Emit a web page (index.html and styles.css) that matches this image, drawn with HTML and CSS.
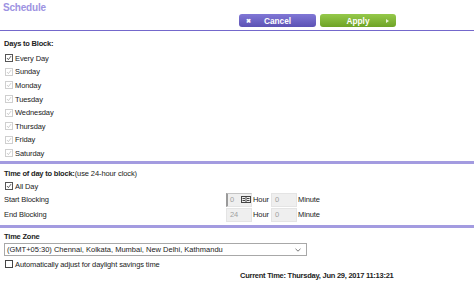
FILE: index.html
```html
<!DOCTYPE html>
<html>
<head>
<meta charset="utf-8">
<title>Schedule</title>
<link rel="stylesheet" href="styles.css">
</head>
<body>
<div class="page">
  <header class="top">
    <h1 class="title">Schedule</h1>
    <div class="actions">
      <button class="btn cancel"><span class="bx">&#x2716;</span><span class="blbl">Cancel</span><span></span></button>
      <button class="btn apply"><span></span><span class="blbl">Apply</span><span class="barr"></span></button>
    </div>
  </header>

  <section class="days">
    <div class="row head">Days to Block:</div>
    <div class="row day"><span class="cb on"><svg viewBox="0 0 8 8"><polyline points="1.3,4 3.2,6.2 6.8,1.4"/></svg></span>Every Day</div>
    <div class="row day"><span class="cb off"><svg viewBox="0 0 8 8"><polyline points="1.3,4 3.2,6.2 6.8,1.4"/></svg></span>Sunday</div>
    <div class="row day"><span class="cb off"><svg viewBox="0 0 8 8"><polyline points="1.3,4 3.2,6.2 6.8,1.4"/></svg></span>Monday</div>
    <div class="row day"><span class="cb off"><svg viewBox="0 0 8 8"><polyline points="1.3,4 3.2,6.2 6.8,1.4"/></svg></span>Tuesday</div>
    <div class="row day"><span class="cb off"><svg viewBox="0 0 8 8"><polyline points="1.3,4 3.2,6.2 6.8,1.4"/></svg></span>Wednesday</div>
    <div class="row day"><span class="cb off"><svg viewBox="0 0 8 8"><polyline points="1.3,4 3.2,6.2 6.8,1.4"/></svg></span>Thursday</div>
    <div class="row day"><span class="cb off"><svg viewBox="0 0 8 8"><polyline points="1.3,4 3.2,6.2 6.8,1.4"/></svg></span>Friday</div>
    <div class="row day"><span class="cb off"><svg viewBox="0 0 8 8"><polyline points="1.3,4 3.2,6.2 6.8,1.4"/></svg></span>Saturday</div>
  </section>

  <div class="divider"></div>

  <section class="times">
    <div class="row trow"><b>Time of day to block:</b>(use 24-hour clock)</div>
    <div class="row trow"><span class="cb on"><svg viewBox="0 0 8 8"><polyline points="1.3,4 3.2,6.2 6.8,1.4"/></svg></span>All Day</div>
    <div class="row block">
      <span class="blabel">Start Blocking</span>
      <span class="field focus">0<svg class="kbd" viewBox="0 0 10 7"><rect x="0.5" y="0.5" width="9" height="6"/><line x1="5" y1="0.5" x2="5" y2="6.5"/><line x1="1.5" y1="2.5" x2="4" y2="2.5"/><line x1="1.5" y1="4.5" x2="4" y2="4.5"/><line x1="6" y1="2.5" x2="8.5" y2="2.5"/><line x1="6" y1="4.5" x2="8.5" y2="4.5"/></svg></span>
      <span class="unit">Hour</span>
      <span class="field">0</span>
      <span class="unit">Minute</span>
    </div>
    <div class="row block second">
      <span class="blabel">End Blocking</span>
      <span class="field">24</span>
      <span class="unit">Hour</span>
      <span class="field">0</span>
      <span class="unit">Minute</span>
    </div>
  </section>

  <div class="divider"></div>

  <section class="zone">
    <div class="row zhead">Time Zone</div>
    <div class="select">
      <span>(GMT+05:30) Chennai, Kolkata, Mumbai, New Delhi, Kathmandu</span>
      <svg class="chev" viewBox="0 0 6 4"><polyline points="0.5,0.8 3,3.2 5.5,0.8"/></svg>
    </div>
    <div class="row auto"><span class="cb empty"></span>Automatically adjust for daylight savings time</div>
    <div class="row current">Current Time: Thursday, Jun 29, 2017 11:13:21</div>
  </section>
</div>
</body>
</html>
```

FILE: styles.css
```css
* {
  box-sizing: border-box;
  margin: 0;
  padding: 0;
}

body {
  margin: 0;
  background: #ffffff;
  font-family: "Liberation Sans", Arial, sans-serif;
  font-size: 7.5px;
  letter-spacing: -0.1px;
  color: #222222;
}

.page {
  width: 474px;
  height: 283px;
  overflow: hidden;
}

.top {
  height: 31px;
  border-bottom: 1px solid #7468cc;
  display: flex;
  justify-content: space-between;
  align-items: flex-start;
  padding-left: 3px;
}

.title {
  font-size: 10px;
  line-height: 12px;
  margin-top: 2px;
  font-weight: bold;
  letter-spacing: -0.2px;
  color: #9d93e2;
}

.actions {
  display: flex;
  gap: 4px;
  margin-top: 14px;
  margin-right: 78px;
}

.btn {
  height: 13px;
  border: none;
  border-radius: 3px;
  color: #ffffff;
  font-family: "Liberation Sans", Arial, sans-serif;
  font-size: 8.3px;
  font-weight: bold;
  display: grid;
  grid-template-columns: 1fr auto 1fr;
  align-items: center;
  padding: 0 6px;
}

.cancel {
  width: 77px;
  background: linear-gradient(#8077d6, #5c52b4);
}

.apply {
  width: 76px;
  background: linear-gradient(#95c94a, #6ea326);
}

.bx {
  justify-self: start;
  font-size: 6px;
  padding-left: 1px;
}

.barr {
  justify-self: end;
  width: 0;
  height: 0;
  border-top: 2px solid transparent;
  border-bottom: 2px solid transparent;
  border-left: 3px solid #e6f3d2;
  margin-right: 1px;
}

.row {
  display: flex;
  align-items: center;
}

.days {
  padding: 6px 0 0 4px;
  height: 130px;
}

.head {
  height: 13px;
  margin-bottom: 1.5px;
  font-weight: bold;
  letter-spacing: -0.2px;
}

.day {
  height: 13.6px;
}

.cb {
  width: 8px;
  height: 8px;
  margin: 0 2px 0 1px;
  display: inline-flex;
  border: 1px solid #cfcfcf;
  background: #ffffff;
}

.cb svg {
  width: 6px;
  height: 6px;
  fill: none;
  stroke-width: 1;
}

.cb.on {
  border-color: #555555;
}

.cb.on svg {
  stroke: #333333;
}

.cb.off svg {
  stroke: #bdbdbd;
}

.cb.empty {
  border-color: #444444;
}

.divider {
  height: 3px;
  background: #a39be0;
}

.times {
  padding: 2.5px 0 0 4px;
  height: 61px;
}

.trow {
  height: 13px;
}

.trow b {
  font-weight: bold;
  letter-spacing: -0.2px;
}

.block {
  height: 14px;
  display: grid;
  grid-template-columns: 222px 26px 19px 26px auto;
  align-items: center;
}

.block.second {
  margin-top: 1px;
}

.field {
  height: 14px;
  background: #efefef;
  border: 1px solid #e4e4e4;
  color: #a0a0a0;
  padding-left: 3px;
  display: flex;
  align-items: center;
  justify-content: space-between;
}

.field.focus {
  border-left: 2px solid #9a9a9a;
  border-top: 1px solid #c4c4c4;
  padding-left: 2px;
}

.kbd {
  width: 10px;
  height: 7px;
  fill: none;
  stroke: #444444;
  stroke-width: 1;
}

.unit {
  padding-left: 1px;
}

.zone {
  padding: 2.5px 0 0 4px;
}

.zhead {
  height: 11px;
  font-weight: bold;
  letter-spacing: -0.2px;
}

.select {
  width: 303px;
  height: 13px;
  margin-top: 1.5px;
  border: 1px solid #a8a8a8;
  display: flex;
  align-items: center;
  justify-content: space-between;
  padding: 0 5px 0 2px;
  color: #222222;
  letter-spacing: 0;
}

.chev {
  width: 6px;
  height: 4px;
  fill: none;
  stroke: #777777;
  stroke-width: 1;
}

.auto {
  height: 12px;
  margin-top: 2px;
}

.current {
  height: 10px;
  padding-left: 236px;
  font-weight: bold;
  letter-spacing: -0.25px;
}
```
